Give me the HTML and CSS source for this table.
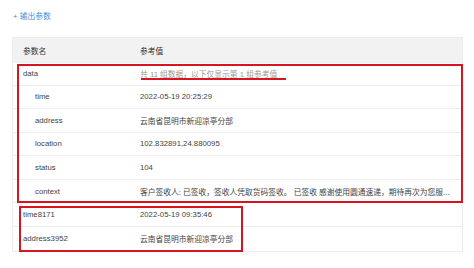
FILE: index.html
```html
<!DOCTYPE html>
<html>
<head>
<meta charset="utf-8">
<link rel="stylesheet" href="styles.css">
</head>
<body>
<div class="page">
  <div class="add-link">+ 输出参数</div>
  <div class="table">
    <div class="row head"><div class="cell">参数名</div><div class="cell">参考值</div></div>
    <div class="row r1"><div class="cell">data</div><div class="cell muted">共 11 组数据，以下仅显示第 1 组参考值</div></div>
    <div class="row r2"><div class="cell sub">time</div><div class="cell">2022-05-19 20:25:29</div></div>
    <div class="row r3"><div class="cell sub">address</div><div class="cell">云南省昆明市新迎凉亭分部</div></div>
    <div class="row r4"><div class="cell sub">location</div><div class="cell">102.832891,24.880095</div></div>
    <div class="row r5"><div class="cell sub">status</div><div class="cell">104</div></div>
    <div class="row r6"><div class="cell sub">context</div><div class="cell ellip">客户签收人: 已签收，签收人凭取货码签收。 已签收 感谢使用圆通速递，期待再次为您服...</div></div>
    <div class="row r7"><div class="cell">time8171</div><div class="cell">2022-05-19 09:35:46</div></div>
    <div class="row r8 last"><div class="cell">address3952</div><div class="cell">云南省昆明市新迎凉亭分部</div></div>
  </div>
  <div class="mark box1"></div>
  <div class="mark box2"></div>
  <div class="mark uline"></div>
</div>
</body>
</html>
```
FILE: styles.css
```css
html, body {
  margin: 0;
  padding: 0;
  background: #fff;
}
body {
  font-family: "Liberation Sans", "Noto Sans CJK SC", sans-serif;
  font-size: 7.75px;
  color: #444;
}
.page {
  position: relative;
  width: 474px;
  height: 268px;
  padding: 10px 11px 0 12px;
  box-sizing: border-box;
}
.add-link {
  color: #4a8fe0;
  height: 13px;
  line-height: 13px;
  padding-left: 1px;
}
.table {
  margin-top: 14px;
  border: 1px solid #ececec;
  width: 451px;
  box-sizing: border-box;
}
.row {
  display: grid;
  grid-template-columns: 117px 1fr;
  height: 23.6px;
  align-items: center;
  border-bottom: 1px solid #ededed;
  box-sizing: border-box;
}
.row.last { border-bottom: none; }
.row.head {
  height: 24.5px;
  background: #f2f2f2;
  color: #333;
  border-bottom: none;
}
.row.r1 { height: 23px; }
.cell {
  padding-left: 10px;
  white-space: nowrap;
  overflow: hidden;
}
.cell.sub { padding-left: 22px; }
.cell.muted { color: #9a9a9a; }
.cell.ellip {
  text-overflow: ellipsis;
  padding-right: 2px;
}
.mark {
  position: absolute;
  box-sizing: border-box;
}
.box1 {
  left: 17px;
  top: 64px;
  width: 446px;
  height: 139px;
  border: 2px solid #d9141e;
}
.box2 {
  left: 19px;
  top: 206px;
  width: 224px;
  height: 46px;
  border: 2px solid #d9141e;
}
.uline {
  left: 141px;
  top: 78px;
  width: 145px;
  height: 2px;
  background: #d9141e;
}
```
